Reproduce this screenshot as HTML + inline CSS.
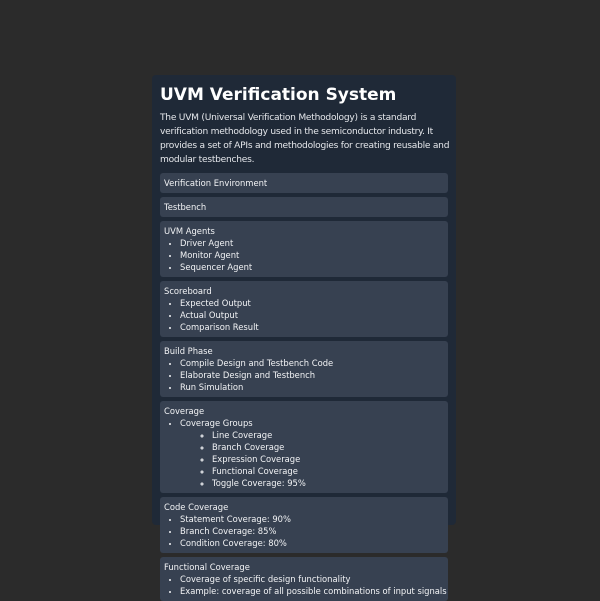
<!DOCTYPE html>
<html><head><style>
body{margin:0;background:#2b2b2b;width:600px;height:600px;overflow:hidden;font-family:"DejaVu Sans","Liberation Sans",sans-serif;color:#e5e7eb}
.card{position:absolute;left:152px;top:75px;width:288px;height:434px;padding:8px;background:#1f2937;border-radius:4px}
h1{margin:0 0 6px;font-size:17px;line-height:20px;color:#fff;font-weight:bold;padding-top:2px}
p{margin:0 0 6px;font-size:9.1px;line-height:14px;color:#e5e7eb;letter-spacing:-0.25px;white-space:nowrap}
.it{background:#374151;border-radius:3px;padding:4px;margin-bottom:4px;font-size:8.4px;line-height:12px;color:#f3f4f6;white-space:nowrap}
ul{margin:0;padding-left:16px}
ul ul{padding-left:32px}
li::marker{font-size:8px}
</style></head><body>
<div class="card">
<h1>UVM Verification System</h1>
<p>The UVM (Universal Verification Methodology) is a standard<br>verification methodology used in the semiconductor industry. It<br>provides a set of APIs and methodologies for creating reusable and<br>modular testbenches.</p>
<div class="it">Verification Environment</div>
<div class="it">Testbench</div>
<div class="it">UVM Agents<ul><li>Driver Agent</li><li>Monitor Agent</li><li>Sequencer Agent</li></ul></div>
<div class="it">Scoreboard<ul><li>Expected Output</li><li>Actual Output</li><li>Comparison Result</li></ul></div>
<div class="it">Build Phase<ul><li>Compile Design and Testbench Code</li><li>Elaborate Design and Testbench</li><li>Run Simulation</li></ul></div>
<div class="it">Coverage<ul><li>Coverage Groups<ul><li>Line Coverage</li><li>Branch Coverage</li><li>Expression Coverage</li><li>Functional Coverage</li><li>Toggle Coverage: 95%</li></ul></li></ul></div>
<div class="it">Code Coverage<ul><li>Statement Coverage: 90%</li><li>Branch Coverage: 85%</li><li>Condition Coverage: 80%</li></ul></div>
<div class="it">Functional Coverage<ul><li>Coverage of specific design functionality</li><li>Example: coverage of all possible combinations of input signals</li></ul></div>
</div>
</body></html>
